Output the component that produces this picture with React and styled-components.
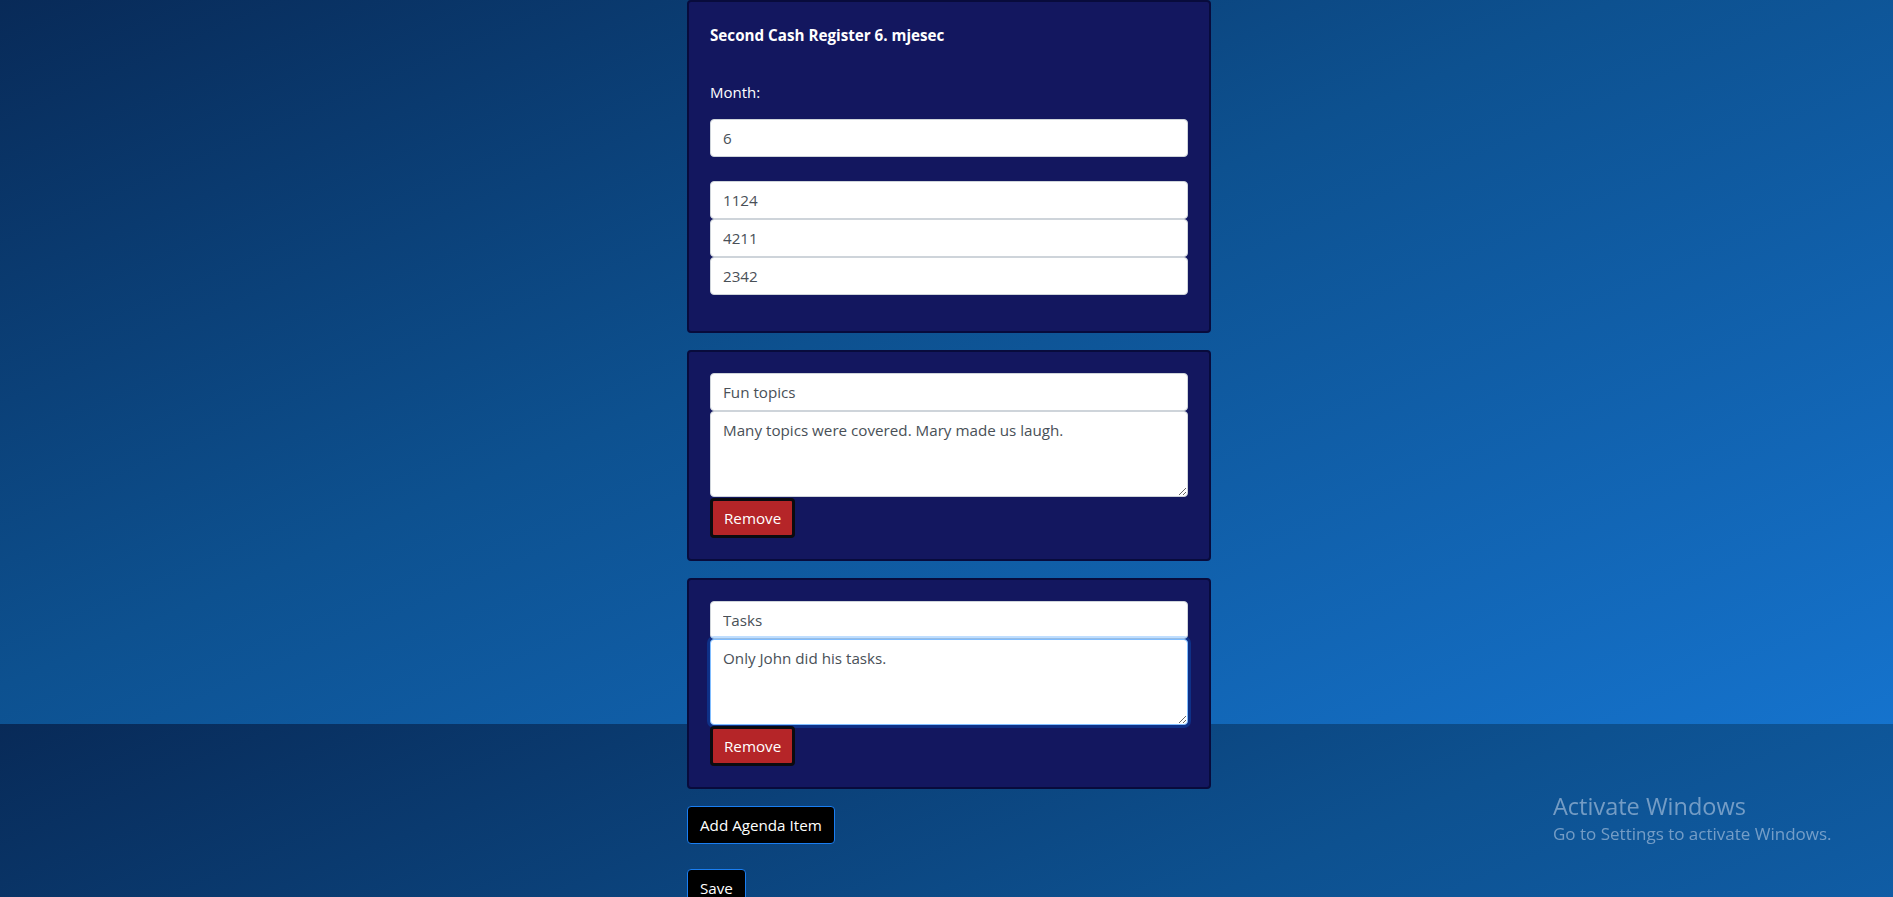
import React from 'react';
import styled, { createGlobalStyle, css } from 'styled-components';

const GlobalStyle = createGlobalStyle`
  html {
    background: linear-gradient(157deg, #082a58 0%, #0d5190 45%, #1573cd 100%);
    background-size: 100% 724px;
    background-repeat: repeat-y;
    min-height: 100%;
  }
  body {
    margin: 0;
    font-family: "Open Sans", "Noto Sans", "Liberation Sans", sans-serif;
    color: #fff;
  }
  * {
    box-sizing: border-box;
  }
`;

const Page = styled.div`
  width: 524px;
  margin: 0 auto;
  padding-left: 5px;
  box-sizing: content-box;
  display: flex;
  flex-direction: column;
  align-items: flex-start;
`;

const Card = styled.div`
  width: 524px;
  background: #13175f;
  border: 2px solid #080b3c;
  border-radius: 4px;
  padding: 21px;
  margin-bottom: 17px;
`;

const Title = styled.h5`
  margin: 0 0 33px;
  font-size: 15.2px;
  font-weight: 700;
  line-height: 24px;
  color: #fff;
`;

const Label = styled.label`
  display: block;
  font-size: 15px;
  line-height: 24px;
  margin-bottom: 15px;
`;

const fieldBase = css`
  display: block;
  width: 100%;
  border: 1px solid #ced4da;
  border-radius: 4px;
  background: #fff;
  color: #495057;
  font-family: "Open Sans", "Noto Sans", sans-serif;
  font-size: 15.2px;
  line-height: 24px;
  padding: 6px 12px;
  margin: 0;
  outline: none;
  ${(p) =>
    p.$focused &&
    css`
      border-color: #80bdff;
      box-shadow: 0 0 0 3px rgba(0, 123, 255, 0.25);
    `}
`;

const Input = styled.input`
  ${fieldBase}
  height: 38px;
  margin-bottom: ${(p) => p.$gap || 0}px;
`;

const TextArea = styled.textarea`
  ${fieldBase}
  height: 86px;
  resize: vertical;
`;

const Group = styled.div`
  margin-bottom: 15px;
`;

const RemoveButton = styled.button`
  margin-top: 1px;
  height: 40px;
  padding: 0 11px;
  background: #b52528;
  color: #fff;
  border: 3px solid #0b0b0f;
  border-radius: 4px;
  font-family: "Open Sans", "Noto Sans", sans-serif;
  font-size: 15.2px;
  cursor: pointer;
`;

const DarkButton = styled.button`
  height: 38px;
  padding: 0 12px;
  background: #000;
  color: #fff;
  border: 1px solid #1a7ef2;
  border-radius: 4px;
  font-family: "Open Sans", "Noto Sans", sans-serif;
  font-size: 15.2px;
  margin-bottom: ${(p) => p.$gap || 0}px;
  cursor: pointer;
`;

const Watermark = styled.div`
  position: fixed;
  left: 1553px;
  top: 790px;
  color: rgba(200, 215, 235, 0.55);
  font-family: "Open Sans", "Noto Sans", sans-serif;
  pointer-events: none;

  .big {
    font-size: 23.5px;
    line-height: 32px;
  }
  .small {
    font-size: 17px;
    line-height: 24px;
  }
`;

const agenda = [
  { title: 'Fun topics', text: 'Many topics were covered. Mary made us laugh.' },
  { title: 'Tasks', text: 'Only John did his tasks.', focused: true },
];

export default function App() {
  return (
    <>
      <GlobalStyle />
      <Page>
        <Card>
          <Title>Second Cash Register 6. mjesec</Title>
          <Label>Month:</Label>
          <Input defaultValue="6" $gap={24} />
          <Group>
            <Input defaultValue="1124" />
            <Input defaultValue="4211" />
            <Input defaultValue="2342" />
          </Group>
        </Card>

        {agenda.map((item, i) => (
          <Card key={i}>
            <Input defaultValue={item.title} />
            <TextArea defaultValue={item.text} $focused={item.focused} />
            <RemoveButton>Remove</RemoveButton>
          </Card>
        ))}

        <DarkButton $gap={25}>Add Agenda Item</DarkButton>
        <DarkButton>Save</DarkButton>
      </Page>
      <Watermark>
        <div className="big">Activate Windows</div>
        <div className="small">Go to Settings to activate Windows.</div>
      </Watermark>
    </>
  );
}
